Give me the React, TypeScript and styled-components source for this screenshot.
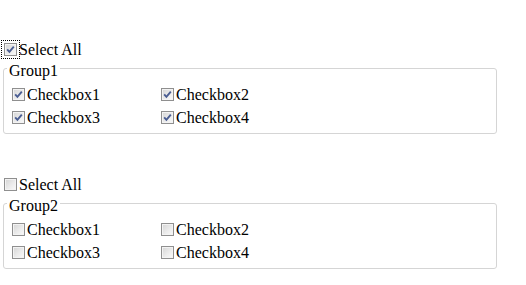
import { useState } from 'react'
import styled, { createGlobalStyle } from 'styled-components'

const GlobalStyle = createGlobalStyle`
  html, body {
    margin: 0;
    padding: 0;
    background: #ffffff;
  }
  body {
    font-family: "Liberation Serif", serif;
    font-size: 16px;
    color: #000000;
  }
`

type CheckboxProps = {
  checked: boolean
  focused?: boolean
  onToggle: () => void
}

const Checkbox = ({ checked, focused, onToggle }: CheckboxProps) => (
  <Box $focused={focused} onClick={onToggle} role="checkbox" aria-checked={checked}>
    {checked && (
      <svg width="11" height="11" viewBox="0 0 11 11">
        <path d="M2.2 5.4 L4.4 7.8 L8.8 2.6" fill="none" stroke="#4a5d92" strokeWidth="1.9" />
      </svg>
    )}
  </Box>
)

type GroupProps = {
  title: string
  focused?: boolean
  initial: boolean
}

const Group = ({ title, focused, initial }: GroupProps) => {
  const [items, setItems] = useState([initial, initial, initial, initial])
  const all = items.every(Boolean)

  const toggleAll = () => setItems(items.map(() => !all))
  const toggle = (i: number) => setItems(items.map((v, j) => (j === i ? !v : v)))

  return (
    <Section>
      <Row $indent={4}>
        <Checkbox checked={all} focused={focused} onToggle={toggleAll} />
        <Label>Select All</Label>
      </Row>
      <Fieldset>
        <Legend>{title}</Legend>
        <Grid>
          {items.map((v, i) => (
            <Row key={i} $indent={0}>
              <Checkbox checked={v} onToggle={() => toggle(i)} />
              <Label>Checkbox{i + 1}</Label>
            </Row>
          ))}
        </Grid>
      </Fieldset>
    </Section>
  )
}

export default function App() {
  return (
    <Page>
      <GlobalStyle />
      <Group title="Group1" focused initial={true} />
      <Group title="Group2" initial={false} />
    </Page>
  )
}

const Page = styled.div`
  width: 526px;
  padding-top: 41px;
  display: flex;
  flex-direction: column;
  gap: 42px;
`

const Section = styled.div`
  display: flex;
  flex-direction: column;
`

const Row = styled.div<{ $indent: number }>`
  display: flex;
  align-items: flex-start;
  gap: 2px;
  padding-left: ${(p) => p.$indent}px;
  height: 18px;
  cursor: default;
  user-select: none;
`

const Label = styled.span`
  font-family: "Liberation Serif", serif;
  font-size: 16px;
  line-height: 18px;
`

const Box = styled.span<{ $focused?: boolean }>`
  box-sizing: border-box;
  width: 13px;
  height: 13px;
  margin-top: 2px;
  flex: none;
  display: flex;
  align-items: center;
  justify-content: center;
  border: 1px solid #8f8f8f;
  background: linear-gradient(135deg, #d4d4d4 0%, #ebebeb 55%, #fafafa 100%);
  box-shadow: inset 0 0 0 1px #f3f3f3;
  outline: ${(p) => (p.$focused ? '1px dotted #000' : 'none')};
  outline-offset: 2px;
`

const Fieldset = styled.fieldset`
  box-sizing: border-box;
  width: 494px;
  margin: 0 0 0 3px;
  padding: 9px 0 6px 3px;
  border: 1px solid #d5d5d5;
  border-radius: 3px;
  min-inline-size: 0;
`

const Legend = styled.legend`
  padding: 6px 2px 0;
  font-family: "Liberation Serif", serif;
  font-size: 16px;
  line-height: 12px;
`

const Grid = styled.div`
  display: grid;
  grid-template-columns: 149px 1fr;
  row-gap: 5px;
  padding-left: 5px;
`
